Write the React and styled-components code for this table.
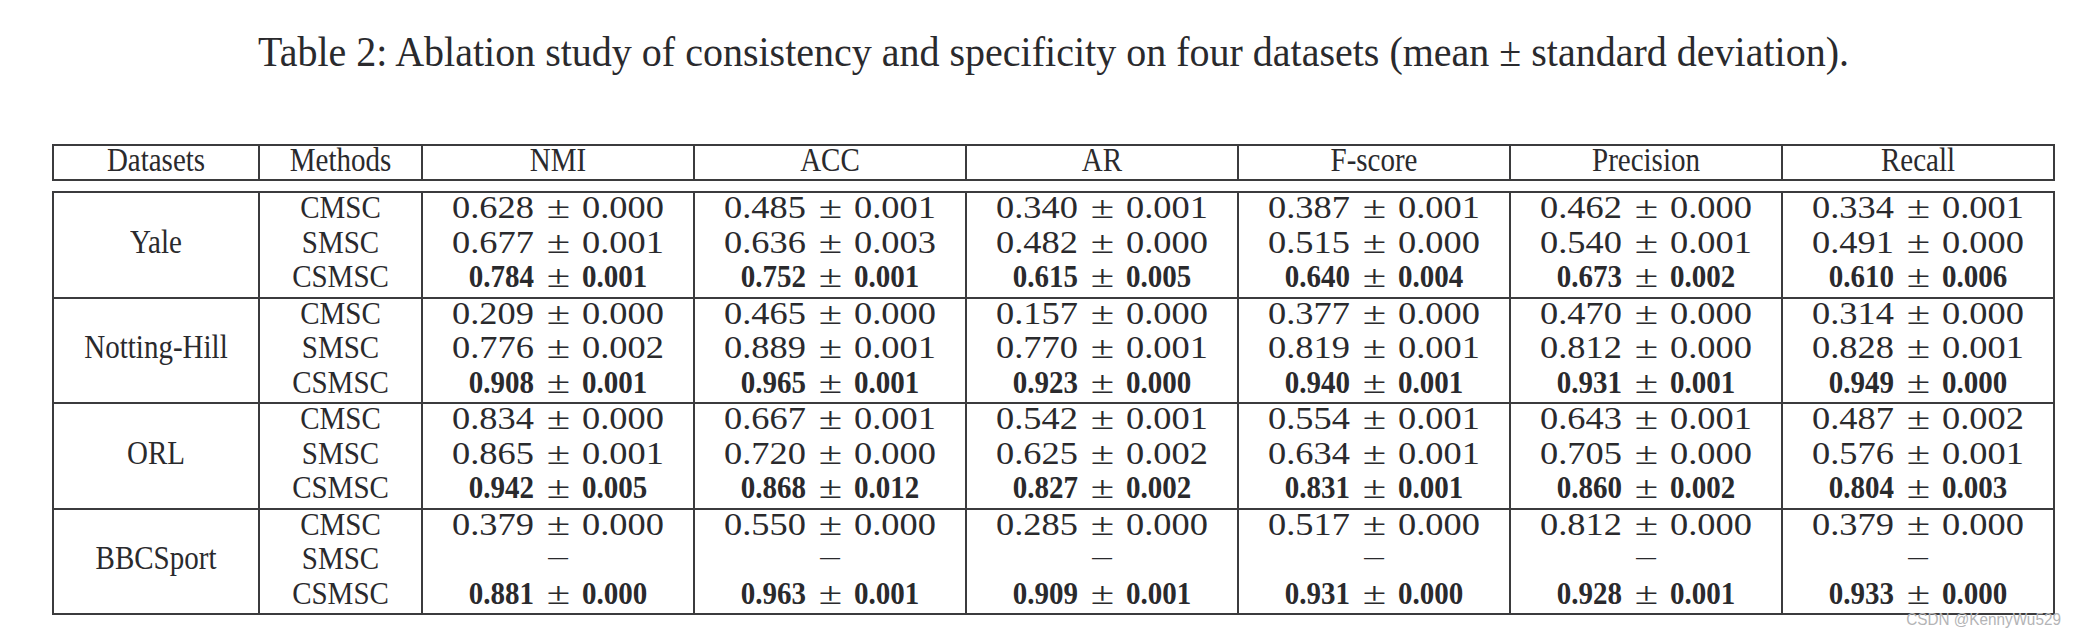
import React from 'react';
import styled, { createGlobalStyle } from 'styled-components';

const LINE = '#3b3b3d';
const INK = '#2a2a2d';
const COLS = '204px 163px repeat(6, 272px)';

const GlobalStyle = createGlobalStyle`
  html, body { margin: 0; padding: 0; background: #ffffff; }
  body {
    font-family: "Liberation Serif", "Times New Roman", serif;
    color: ${INK};
  }
`;

const Page = styled.div`
  position: relative;
  width: 2076px;
  height: 639px;
  box-sizing: border-box;
  padding: 33px 0 0 52px;
  overflow: hidden;
`;

const Figure = styled.div`
  width: 2003px;
  display: flex;
  flex-direction: column;
`;

const Caption = styled.div`
  font-size: 40px;
  line-height: 40px;
  text-align: center;
  white-space: nowrap;
  margin-bottom: 71px;
`;

const CaptionText = styled.span`
  display: inline-block;
  line-height: 30px;
  transform: scaleY(1.08);
  transform-origin: center 28.5px;
`;

const Box = styled.div`
  border: 2px solid ${LINE};
  margin-top: ${(p) => p.$gap || 0}px;
`;

const HeaderRow = styled.div`
  display: grid;
  grid-template-columns: ${COLS};
`;

const HeadCell = styled.div`
  font-size: 29px;
  line-height: 28px;
  padding-bottom: 5px;
  text-align: center;
  white-space: nowrap;
  border-left: ${(p) => (p.$first ? 'none' : `2px solid ${LINE}`)};
`;

const HeadText = styled.span`
  display: inline-block;
  line-height: 20px;
  transform: translateY(1px) scaleY(1.16);
  transform-origin: center 19.75px;
`;

const Group = styled.div`
  display: grid;
  grid-template-columns: ${COLS};
  border-top: ${(p) => (p.$first ? 'none' : `2px solid ${LINE}`)};
`;

const DatasetCell = styled.div`
  display: flex;
  align-items: center;
  justify-content: center;
  padding-bottom: 4px;
  font-size: 29px;
  white-space: nowrap;
`;

const Column = styled.div`
  display: flex;
  flex-direction: column;
  border-left: 2px solid ${LINE};
`;

const Cell = styled.div`
  height: 34.5px;
  box-sizing: border-box;
  padding-top: 5px;
  display: flex;
  justify-content: center;
  align-items: baseline;
  gap: 12.5px;
  font-size: 29px;
  white-space: nowrap;
`;

const BodyText = styled.span`
  display: inline-block;
  line-height: 20px;
  transform: scaleY(${(p) => p.$sy || 1.075});
  transform-origin: center 19.75px;
`;

const MathNum = styled.span`
  display: inline-block;
  width: 82px;
  text-align: center;
  font-size: 28px;
  line-height: 20px;
  transform: scale(1.3, 1.1);
  transform-origin: center 19.45px;
`;

const BoldNum = styled.span`
  display: inline-block;
  font-size: 29px;
  font-weight: 700;
  line-height: 20px;
  transform: scaleY(1.075);
  transform-origin: center 19.75px;
`;

const Pm = styled.span`
  display: inline-block;
  width: 23px;
  text-align: center;
  font-size: 30px;
  line-height: 20px;
  transform: scale(1.42, 1.04);
  transform-origin: center 20.1px;
`;

const Dash = styled.span`
  display: inline-block;
  font-size: 28px;
  line-height: 20px;
  transform: translateY(-3px) scaleX(1.4);
`;

const Watermark = styled.div`
  position: absolute;
  right: 15px;
  top: 610px;
  font-family: "Liberation Sans", Arial, sans-serif;
  font-size: 17px;
  line-height: 20px;
  color: #b4b4b6;
  white-space: nowrap;
  transform: scaleX(0.9);
  transform-origin: right center;
`;

const HEADERS = ['Datasets', 'Methods', 'NMI', 'ACC', 'AR', 'F-score', 'Precision', 'Recall'];
const METHODS = ['CMSC', 'SMSC', 'CSMSC'];

const DATA = [
  {
    name: 'Yale',
    rows: [
      ['0.628 0.000', '0.485 0.001', '0.340 0.001', '0.387 0.001', '0.462 0.000', '0.334 0.001'],
      ['0.677 0.001', '0.636 0.003', '0.482 0.000', '0.515 0.000', '0.540 0.001', '0.491 0.000'],
      ['0.784 0.001', '0.752 0.001', '0.615 0.005', '0.640 0.004', '0.673 0.002', '0.610 0.006'],
    ],
  },
  {
    name: 'Notting-Hill',
    rows: [
      ['0.209 0.000', '0.465 0.000', '0.157 0.000', '0.377 0.000', '0.470 0.000', '0.314 0.000'],
      ['0.776 0.002', '0.889 0.001', '0.770 0.001', '0.819 0.001', '0.812 0.000', '0.828 0.001'],
      ['0.908 0.001', '0.965 0.001', '0.923 0.000', '0.940 0.001', '0.931 0.001', '0.949 0.000'],
    ],
  },
  {
    name: 'ORL',
    rows: [
      ['0.834 0.000', '0.667 0.001', '0.542 0.001', '0.554 0.001', '0.643 0.001', '0.487 0.002'],
      ['0.865 0.001', '0.720 0.000', '0.625 0.002', '0.634 0.001', '0.705 0.000', '0.576 0.001'],
      ['0.942 0.005', '0.868 0.012', '0.827 0.002', '0.831 0.001', '0.860 0.002', '0.804 0.003'],
    ],
  },
  {
    name: 'BBCSport',
    rows: [
      ['0.379 0.000', '0.550 0.000', '0.285 0.000', '0.517 0.000', '0.812 0.000', '0.379 0.000'],
      [null, null, null, null, null, null],
      ['0.881 0.000', '0.963 0.001', '0.909 0.001', '0.931 0.000', '0.928 0.001', '0.933 0.000'],
    ],
  },
];

function Value({ v, bold }) {
  if (v === null) {
    return (
      <Cell>
        <Dash>–</Dash>
      </Cell>
    );
  }
  const [mean, sd] = v.split(' ');
  const Num = bold ? BoldNum : MathNum;
  return (
    <Cell>
      <Num>{mean}</Num>
      <Pm>±</Pm>
      <Num>{sd}</Num>
    </Cell>
  );
}

export default function App() {
  return (
    <>
      <GlobalStyle />
      <Page>
        <Figure>
          <Caption>
            <CaptionText>
              Table 2: Ablation study of consistency and specificity on four datasets (mean ± standard deviation).
            </CaptionText>
          </Caption>
          <Box>
            <HeaderRow>
              {HEADERS.map((h, i) => (
                <HeadCell key={h} $first={i === 0}>
                  <HeadText>{h}</HeadText>
                </HeadCell>
              ))}
            </HeaderRow>
          </Box>
          <Box $gap={10}>
            {DATA.map((g, gi) => (
              <Group key={g.name} $first={gi === 0}>
                <DatasetCell>
                  <BodyText $sy={1.18}>{g.name}</BodyText>
                </DatasetCell>
                <Column>
                  {METHODS.map((m) => (
                    <Cell key={m}>
                      <BodyText>{m}</BodyText>
                    </Cell>
                  ))}
                </Column>
                {[0, 1, 2, 3, 4, 5].map((c) => (
                  <Column key={c}>
                    {g.rows.map((r, ri) => (
                      <Value key={ri} v={r[c]} bold={ri === 2} />
                    ))}
                  </Column>
                ))}
              </Group>
            ))}
          </Box>
        </Figure>
        <Watermark>CSDN @KennyWu529</Watermark>
      </Page>
    </>
  );
}
